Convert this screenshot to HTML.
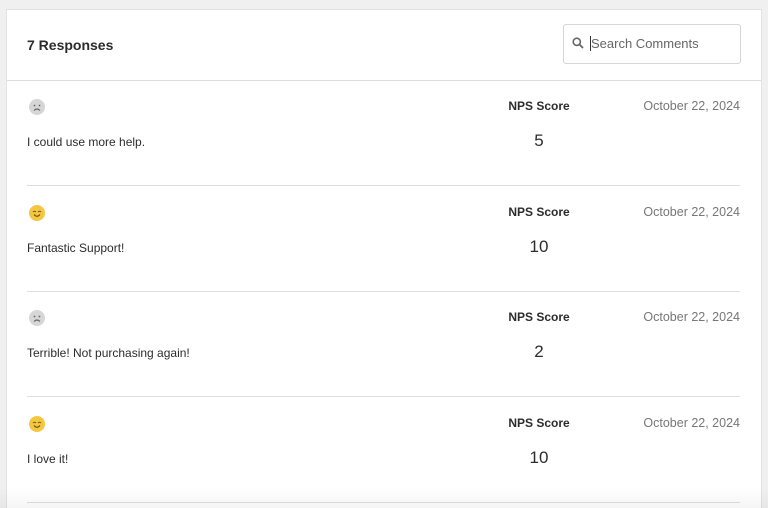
<!DOCTYPE html>
<html style="width:768px;height:508px;overflow:hidden"><head><style>
body{margin:0;width:768px;height:508px;background:#f0f0f0;font-family:"Liberation Sans",Arial,sans-serif;overflow:hidden;position:relative}
.card{position:absolute;left:6px;top:9px;width:754px;height:520px;background:#fff;border:1px solid #e2e2e2}
.hdr{position:absolute;left:0;top:0;width:754px;height:70px;border-bottom:1px solid #dcdcdc}
.title{position:absolute;left:20px;top:27px;font-size:14px;font-weight:bold;color:#2c2c2c}
.search{position:absolute;left:556px;top:14px;width:176px;height:38px;border:1px solid #d6d6d6;border-radius:3px}
.search span{position:absolute;left:27px;top:11px;font-size:13px;color:#666}
.search i{position:absolute;left:26px;top:11px;width:1px;height:15px;background:#333}
.row{position:absolute;left:20px;width:713px;height:105px;border-bottom:1px solid #dedede}
.emo{position:absolute;left:2px;top:19px}
.cm{position:absolute;left:0;top:55px;font-size:12px;color:#2c2c2c}
.nps{position:absolute;left:462px;width:100px;white-space:nowrap;text-align:center;top:19px;font-size:12px;font-weight:bold;color:#2c2c2c}
.sc{position:absolute;left:462px;width:100px;text-align:center;top:51px;font-size:17px;color:#2c2c2c}
.dt{position:absolute;right:0;top:19px;font-size:12.5px;color:#777}
</style></head><body>
<div class="card">
<div class="hdr"><div class="title">7 Responses</div>
<div class="search"><svg style="position:absolute;left:8px;top:12px" width="12" height="12" viewBox="0 0 12 12"><circle cx="4.8" cy="4.8" r="3.6" fill="none" stroke="#666" stroke-width="1.6"/><path d="M7.5 7.5L11 11" stroke="#666" stroke-width="1.8"/></svg><i></i><span>Search Comments</span></div></div>

<div class="row" style="top:70px">
<svg class="emo" width="16" height="16" viewBox="0 0 16 16"><circle cx="8" cy="8" r="8" fill="#d6d6d6"/><circle cx="5.5" cy="6.5" r="0.9" fill="#666"/><circle cx="10.5" cy="6.5" r="0.9" fill="#666"/><path d="M5 11.5Q8 8.5 11 11.5" stroke="#666" stroke-width="1.2" fill="none"/></svg>
<div class="cm">I could use more help.</div><div class="nps">NPS Score</div><div class="sc">5</div><div class="dt">October 22, 2024</div></div>

<div class="row" style="top:176px">
<svg class="emo" width="16" height="16" viewBox="0 0 16 16"><circle cx="8" cy="8" r="8" fill="#f4c73e"/><path d="M4 7Q5.5 5.5 7 7M9 7Q10.5 5.5 12 7" stroke="#6a5520" stroke-width="1" fill="none"/><path d="M5 9.5Q8 13 11 9.5" stroke="#6a5520" stroke-width="1.2" fill="none"/></svg>
<div class="cm">Fantastic Support!</div><div class="nps">NPS Score</div><div class="sc">10</div><div class="dt">October 22, 2024</div></div>

<div class="row" style="top:281px">
<svg class="emo" width="16" height="16" viewBox="0 0 16 16"><circle cx="8" cy="8" r="8" fill="#d6d6d6"/><circle cx="5.5" cy="6.5" r="0.9" fill="#666"/><circle cx="10.5" cy="6.5" r="0.9" fill="#666"/><path d="M5 11.5Q8 8.5 11 11.5" stroke="#666" stroke-width="1.2" fill="none"/></svg>
<div class="cm">Terrible! Not purchasing again!</div><div class="nps">NPS Score</div><div class="sc">2</div><div class="dt">October 22, 2024</div></div>

<div class="row" style="top:387px">
<svg class="emo" width="16" height="16" viewBox="0 0 16 16"><circle cx="8" cy="8" r="8" fill="#f4c73e"/><path d="M4 7Q5.5 5.5 7 7M9 7Q10.5 5.5 12 7" stroke="#6a5520" stroke-width="1" fill="none"/><path d="M5 9.5Q8 13 11 9.5" stroke="#6a5520" stroke-width="1.2" fill="none"/></svg>
<div class="cm">I love it!</div><div class="nps">NPS Score</div><div class="sc">10</div><div class="dt">October 22, 2024</div></div>
</div>
<div style="position:absolute;left:0;top:488px;width:768px;height:20px;background:linear-gradient(rgba(0,0,0,0),rgba(0,0,0,0.04))"></div>
</body></html>
